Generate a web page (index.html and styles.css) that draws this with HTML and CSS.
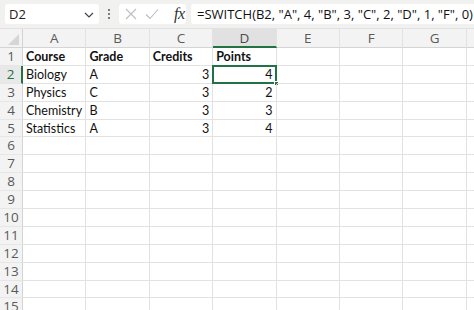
FILE: index.html
```html
<!DOCTYPE html>
<html>
<head>
<meta charset="utf-8">
<link rel="stylesheet" href="styles.css">
</head>
<body>
<div class="app">
  <div class="toolbar">
    <div class="namebox">
      <span class="nb-text">D2</span>
      <svg class="chev" width="10" height="6" viewBox="0 0 10 6"><path d="M1 1 L5 5 L9 1" fill="none" stroke="#444" stroke-width="1.2"/></svg>
    </div>
    <div class="dots"><i></i><i></i><i></i></div>
    <div class="fxbox">
      <svg class="ico" width="14" height="14" viewBox="0 0 14 14"><path d="M2 2 L12 12 M12 2 L2 12" stroke="#bdbdbd" stroke-width="1.1" fill="none"/></svg>
      <svg class="ico" width="16" height="14" viewBox="0 0 16 14"><path d="M2 7.5 L6 11.5 L14 2.5" stroke="#bdbdbd" stroke-width="1.1" fill="none"/></svg>
      <span class="fx">fx</span>
    </div>
    <div class="formula">=SWITCH(B2, "A", 4, "B", 3, "C", 2, "D", 1, "F", 0)</div>
  </div>
  <div class="sheet">
    <div class="corner"><svg width="23" height="19" viewBox="0 0 23 19"><path d="M19 5 L19 16 L8 16 Z" fill="#d6d6d6"/></svg></div>
    <div class="ch">A</div><div class="ch">B</div><div class="ch">C</div><div class="ch sel">D</div><div class="ch">E</div><div class="ch">F</div><div class="ch">G</div><div class="ch"></div>

    <div class="rh">1</div><div class="c b">Course</div><div class="c b">Grade</div><div class="c b">Credits</div><div class="c b">Points</div><div class="c"></div><div class="c"></div><div class="c"></div><div class="c"></div>
    <div class="rh sel">2</div><div class="c">Biology</div><div class="c">A</div><div class="c n">3</div><div class="c n active">4<span class="handle"></span></div><div class="c"></div><div class="c"></div><div class="c"></div><div class="c"></div>
    <div class="rh">3</div><div class="c">Physics</div><div class="c">C</div><div class="c n">3</div><div class="c n">2</div><div class="c"></div><div class="c"></div><div class="c"></div><div class="c"></div>
    <div class="rh">4</div><div class="c">Chemistry</div><div class="c">B</div><div class="c n">3</div><div class="c n">3</div><div class="c"></div><div class="c"></div><div class="c"></div><div class="c"></div>
    <div class="rh">5</div><div class="c">Statistics</div><div class="c">A</div><div class="c n">3</div><div class="c n">4</div><div class="c"></div><div class="c"></div><div class="c"></div><div class="c"></div>
    <div class="rh">6</div><div class="c"></div><div class="c"></div><div class="c"></div><div class="c"></div><div class="c"></div><div class="c"></div><div class="c"></div><div class="c"></div>
    <div class="rh">7</div><div class="c"></div><div class="c"></div><div class="c"></div><div class="c"></div><div class="c"></div><div class="c"></div><div class="c"></div><div class="c"></div>
    <div class="rh">8</div><div class="c"></div><div class="c"></div><div class="c"></div><div class="c"></div><div class="c"></div><div class="c"></div><div class="c"></div><div class="c"></div>
    <div class="rh">9</div><div class="c"></div><div class="c"></div><div class="c"></div><div class="c"></div><div class="c"></div><div class="c"></div><div class="c"></div><div class="c"></div>
    <div class="rh">10</div><div class="c"></div><div class="c"></div><div class="c"></div><div class="c"></div><div class="c"></div><div class="c"></div><div class="c"></div><div class="c"></div>
    <div class="rh">11</div><div class="c"></div><div class="c"></div><div class="c"></div><div class="c"></div><div class="c"></div><div class="c"></div><div class="c"></div><div class="c"></div>
    <div class="rh">12</div><div class="c"></div><div class="c"></div><div class="c"></div><div class="c"></div><div class="c"></div><div class="c"></div><div class="c"></div><div class="c"></div>
    <div class="rh">13</div><div class="c"></div><div class="c"></div><div class="c"></div><div class="c"></div><div class="c"></div><div class="c"></div><div class="c"></div><div class="c"></div>
    <div class="rh">14</div><div class="c"></div><div class="c"></div><div class="c"></div><div class="c"></div><div class="c"></div><div class="c"></div><div class="c"></div><div class="c"></div>
    <div class="rh">15</div><div class="c"></div><div class="c"></div><div class="c"></div><div class="c"></div><div class="c"></div><div class="c"></div><div class="c"></div><div class="c"></div>
  </div>
</div>
</body>
</html>
```

FILE: styles.css
```css
* { box-sizing: border-box; }
html, body { margin: 0; padding: 0; }
body { width: 474px; height: 310px; overflow: hidden; background: #fff; }
.app { width: 474px; height: 310px; overflow: hidden; }

.toolbar {
  height: 29px;
  background: #f1f1f0;
  display: flex;
  align-items: center;
  padding-left: 5px;
  border-bottom: 1px solid #e2e2e2;
  font-family: "Open Sans", sans-serif;
}
.namebox {
  width: 94px; height: 20px;
  background: #fff;
  border-radius: 3px;
  display: flex; align-items: center; justify-content: space-between;
  padding: 0 5px 0 4px;
  font-size: 13px; color: #222;
}
.chev { margin-top: 1px; }
.dots {
  width: 20px; height: 20px;
  display: flex; flex-direction: column; align-items: center; justify-content: center; gap: 2px;
}
.dots i { display: block; width: 2px; height: 2px; background: #555; border-radius: 1px; }
.fxbox {
  width: 67px; height: 20px; background: #fff; border-radius: 3px;
  display: flex; align-items: center; padding-left: 5px; gap: 6px;
}
.fx {
  font-family: "Liberation Serif", serif; font-style: italic; font-size: 16px; color: #333;
  margin-left: 8px; letter-spacing: -0.5px;
}
.formula {
  flex: 1; height: 20px; margin-left: 5px; background: #fff; border-radius: 3px 0 0 3px;
  padding-left: 6px; font-size: 13px; line-height: 20px; color: #111; white-space: nowrap;
}

.sheet {
  display: grid;
  grid-template-columns: 23px repeat(7, 63.4px) 40px;
  grid-template-rows: 19px;
  grid-auto-rows: 17.9px;
  font-family: "Lato", sans-serif;
}
.corner { background: #f3f3f3; border-right: 1px solid #d4d4d4; border-bottom: 1px solid #d4d4d4; line-height: 0; }
.ch {
  background: #f3f3f3; border-bottom: 1px solid #d4d4d4; border-right: 1px solid #e2e2e2;
  text-align: center; font-family: "Open Sans", sans-serif; font-size: 13.5px; color: #5a5a5a; line-height: 18px;
}
.ch.sel { background: #e1e1e1; border-bottom: 2px solid #217346; color: #4a4a4a; }
.rh {
  background: #f3f3f3; border-right: 1px solid #d4d4d4; border-bottom: 1px solid #e6e6e6;
  text-align: center; font-family: "Open Sans", sans-serif; font-size: 13.5px; color: #5a5a5a; line-height: 17px;
}
.rh.sel { color: #217346; border-right: 2px solid #217346; background: #e8e8e8; }
.c {
  border-right: 1px solid #e2e2e2; border-bottom: 1px solid #e2e2e2;
  font-size: 12.5px; color: #111; padding: 0 3px; line-height: 17px; white-space: nowrap;
  position: relative;
}
.c.b { font-weight: bold; }
.c.n { text-align: right; }
.c.active { border: 2px solid #217346; margin: -1px 0 0 -1px; line-height: 15px; padding-right: 2px; }
.handle { position: absolute; right: -4px; bottom: -4px; width: 5px; height: 5px; background: #217346; border: 1px solid #fff; }
```
